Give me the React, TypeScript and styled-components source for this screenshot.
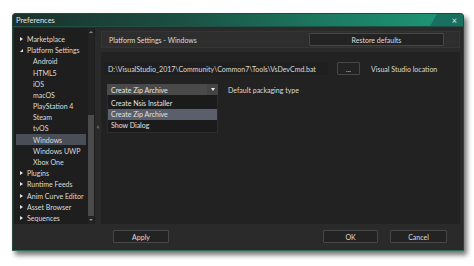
import React from "react";
import styled, { createGlobalStyle, css } from "styled-components";

const Global = createGlobalStyle`
  html, body { margin: 0; padding: 0; background: #ffffff; }
  body { font-family: Lato, "Open Sans", sans-serif; }
  * { box-sizing: border-box; }
`;

const Page = styled.div`
  width: 474px;
  height: 266px;
  padding: 13px 0 0 12px;
`;

const Window = styled.div`
  width: 452px;
  height: 238px;
  display: flex;
  flex-direction: column;
  background: #2a2a2a;
  border: 1px solid #2b463f;
  border-bottom-color: #2f6b5a;
  border-radius: 4px 4px 1px 1px;
  box-shadow: 3px 4px 5px rgba(0, 0, 0, 0.55);
  overflow: hidden;
  font-family: Lato, "Open Sans", sans-serif;
  font-size: 7px;
  color: #d9d9d9;
`;

const TitleBar = styled.div`
  height: 13px;
  flex: none;
  display: flex;
  align-items: stretch;
  background: linear-gradient(90deg, #1b312c 0%, #1b4d41 35%, #1c7a61 70%, #1e9a78 100%);
  border-bottom: 1px solid #1f4f43;
`;

const TitleText = styled.div`
  flex: 1;
  display: flex;
  align-items: center;
  padding-left: 3px;
  font-size: 7.5px;
  color: #e4e4e4;
`;

const CloseTab = styled.div`
  width: 33px;
  display: flex;
  align-items: center;
  justify-content: flex-end;
  padding-right: 6px;
  background: #187060;
  clip-path: polygon(7px 0, 100% 0, 100% 100%, 0 100%);
  color: #e0e0e0;
  font-size: 9px;
  line-height: 1;
`;

const Body = styled.div`
  flex: none;
  display: flex;
  padding: 1px 3px 0 1px;
`;

const TreePanel = styled.div`
  width: 81px;
  height: 196px;
  flex: none;
  display: flex;
  background: #1e1e1e;
`;

const TreeArea = styled.div`
  flex: 1;
  overflow: hidden;
  padding: 5.4px 2px 0;
`;

const Row = styled.div<{ $level: number; $selected?: boolean }>`
  height: 11.2px;
  display: flex;
  align-items: center;
  padding-left: ${(p) => (p.$level === 0 ? 4 : 17)}px;
  white-space: nowrap;
  color: #dcdcdc;
  ${(p) =>
    p.$selected &&
    css`
      background: #4a4e57;
    `}
`;

const ArrowSlot = styled.span`
  width: 7px;
  flex: none;
  display: flex;
  align-items: center;
`;

const Collapsed = styled.span`
  width: 0;
  height: 0;
  border-top: 2.5px solid transparent;
  border-bottom: 2.5px solid transparent;
  border-left: 3px solid #e6e6e6;
`;

const Expanded = styled.span`
  width: 0;
  height: 0;
  border-left: 3.5px solid transparent;
  border-bottom: 3.5px solid #e6e6e6;
`;

const Scrollbar = styled.div`
  width: 6px;
  flex: none;
  display: flex;
  flex-direction: column;
  align-items: center;
  margin-right: 1px;
  background: #232323;
`;

const ScrollArrow = styled.div<{ $down?: boolean }>`
  height: 8px;
  flex: none;
  display: flex;
  align-items: center;
  justify-content: center;
  &::after {
    content: "";
    width: 0;
    height: 0;
    border-left: 2px solid transparent;
    border-right: 2px solid transparent;
    ${(p) =>
      p.$down
        ? css`border-top: 2px solid #8a8a8a;`
        : css`border-bottom: 2px solid #8a8a8a;`}
  }
`;

const Track = styled.div`
  flex: 1;
  width: 100%;
  display: flex;
  flex-direction: column;
  justify-content: flex-end;
`;

const Thumb = styled.div`
  height: 101px;
  width: 100%;
  background: #4b4b4b;
`;

const Gutter = styled.div`
  width: 6px;
  flex: none;
  display: flex;
  align-items: center;
  justify-content: center;
  color: #8d8d8d;
  font-size: 7px;
`;

const RightPanel = styled.div`
  flex: 1;
  display: flex;
  flex-direction: column;
  height: 196px;
`;

const Header = styled.div`
  margin-top: 3px;
  height: 17px;
  flex: none;
  display: flex;
  align-items: center;
  justify-content: space-between;
  padding: 0 15px 0 7px;
  background: #2e2e2e;
  border: 1px solid #353535;
`;

const Content = styled.div`
  margin-top: 4px;
  flex: 1;
  background: #222222;
  padding: 10px 0 0 3px;
  display: flex;
  flex-direction: column;
  gap: 9px;
`;

const FieldRow = styled.div`
  display: flex;
  align-items: center;
`;

const PathInput = styled.div`
  width: 224px;
  height: 13px;
  display: flex;
  align-items: center;
  padding-left: 4px;
  background: #1f1f1f;
  white-space: nowrap;
  color: #dcdcdc;
`;

const Button = styled.div<{ $w: number }>`
  width: ${(p) => p.$w}px;
  height: 13px;
  flex: none;
  display: flex;
  align-items: center;
  justify-content: center;
  background: #232323;
  border: 1px solid #474747;
  border-radius: 1px;
  color: #dedede;
`;

const BrowseButton = styled(Button)`
  margin: 0 11px 0 9px;
`;

const Label = styled.span`
  color: #dcdcdc;
  white-space: nowrap;
`;

const SelectWrap = styled.div`
  position: relative;
  margin-left: 3px;
  margin-right: 10px;
`;

const Select = styled.div`
  width: 111px;
  height: 11px;
  display: flex;
  align-items: center;
  background: #4a4a4a;
  color: #e6e6e6;
`;

const SelectText = styled.span`
  flex: 1;
  padding-left: 4px;
`;

const SelectArrow = styled.span`
  width: 11px;
  height: 100%;
  display: flex;
  align-items: center;
  justify-content: center;
  background: #444;
  &::after {
    content: "";
    width: 0;
    height: 0;
    border-left: 2.5px solid transparent;
    border-right: 2.5px solid transparent;
    border-top: 3px solid #eeeeee;
  }
`;

const Menu = styled.div`
  position: absolute;
  top: 100%;
  left: 0;
  width: 111px;
  height: 38px;
  padding-top: 2.5px;
  background: #1b1b1b;
  border: 1px solid #2c2c2c;
  border-top: none;
  z-index: 2;
`;

const MenuItem = styled.div<{ $active?: boolean }>`
  height: 11px;
  display: flex;
  align-items: center;
  padding-left: 3px;
  color: #e2e2e2;
  ${(p) =>
    p.$active &&
    css`
      background: #5a5f6b;
    `}
`;

const Footer = styled.div`
  flex: 1;
  display: flex;
  align-items: center;
  padding: 0 16px 1px 100px;
`;

const Spacer = styled.div`
  flex: 1;
`;

const FooterGap = styled.div`
  width: 12px;
`;

type Item = { label: string; level: number; arrow?: "c" | "e"; selected?: boolean };

const tree: Item[] = [
  { label: "Marketplace", level: 0, arrow: "c" },
  { label: "Platform Settings", level: 0, arrow: "e" },
  { label: "Android", level: 1 },
  { label: "HTML5", level: 1 },
  { label: "iOS", level: 1 },
  { label: "macOS", level: 1 },
  { label: "PlayStation 4", level: 1 },
  { label: "Steam", level: 1 },
  { label: "tvOS", level: 1 },
  { label: "Windows", level: 1, selected: true },
  { label: "Windows UWP", level: 1 },
  { label: "Xbox One", level: 1 },
  { label: "Plugins", level: 0, arrow: "c" },
  { label: "Runtime Feeds", level: 0, arrow: "c" },
  { label: "Anim Curve Editor", level: 0, arrow: "c" },
  { label: "Asset Browser", level: 0, arrow: "c" },
  { label: "Sequences", level: 0, arrow: "c" },
];

export default function App() {
  return (
    <Page>
      <Global />
      <Window>
        <TitleBar>
          <TitleText>Preferences</TitleText>
          <CloseTab>×</CloseTab>
        </TitleBar>
        <Body>
          <TreePanel>
            <TreeArea>
              {tree.map((it) => (
                <Row key={it.label} $level={it.level} $selected={it.selected}>
                  {it.level === 0 && (
                    <ArrowSlot>{it.arrow === "e" ? <Expanded /> : <Collapsed />}</ArrowSlot>
                  )}
                  {it.label}
                </Row>
              ))}
            </TreeArea>
            <Scrollbar>
              <ScrollArrow />
              <Track>
                <Thumb />
              </Track>
              <ScrollArrow $down />
            </Scrollbar>
          </TreePanel>
          <Gutter>«</Gutter>
          <RightPanel>
            <Header>
              <Label>Platform Settings - Windows</Label>
              <Button $w={135}>Restore defaults</Button>
            </Header>
            <Content>
              <FieldRow>
                <PathInput>D:\VisualStudio_2017\Community\Common7\Tools\VsDevCmd.bat</PathInput>
                <BrowseButton $w={23}>...</BrowseButton>
                <Label>Visual Studio location</Label>
              </FieldRow>
              <FieldRow>
                <SelectWrap>
                  <Select>
                    <SelectText>Create Zip Archive</SelectText>
                    <SelectArrow />
                  </Select>
                  <Menu>
                    <MenuItem>Create Nsis Installer</MenuItem>
                    <MenuItem $active>Create Zip Archive</MenuItem>
                    <MenuItem>Show Dialog</MenuItem>
                  </Menu>
                </SelectWrap>
                <Label>Default packaging type</Label>
              </FieldRow>
            </Content>
          </RightPanel>
        </Body>
        <Footer>
          <Button $w={56}>Apply</Button>
          <Spacer />
          <Button $w={55}>OK</Button>
          <FooterGap />
          <Button $w={57}>Cancel</Button>
        </Footer>
      </Window>
    </Page>
  );
}
